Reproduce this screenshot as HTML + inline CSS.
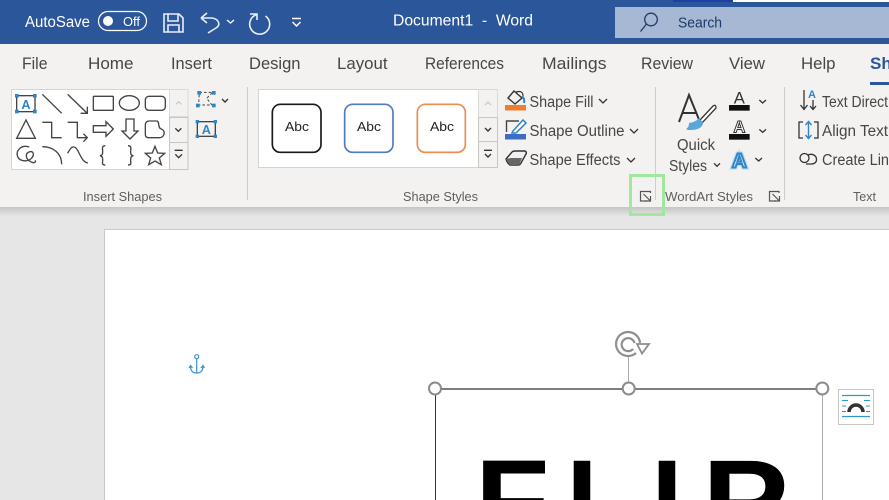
<!DOCTYPE html>
<html><head><meta charset="utf-8"><title>Word</title>
<style>
html,body{margin:0;padding:0;width:889px;height:500px;overflow:hidden;background:#e6e6e6}
svg{display:block;position:absolute;left:0;top:0}
text{font-family:"Liberation Sans",sans-serif}
#big{position:absolute;left:0;top:440px;width:889px;height:60px;overflow:hidden}
#big span{position:absolute;top:4px;height:56px;overflow:hidden;font:bold 115px/115px "Liberation Sans",sans-serif;color:#000;transform-origin:0 0}
</style></head><body>
<svg width="889" height="500" viewBox="0 0 889 500" xmlns="http://www.w3.org/2000/svg">
<defs><linearGradient id="sh" x1="0" y1="0" x2="0" y2="1"><stop offset="0" stop-color="#c4c4c4"/><stop offset="1" stop-color="#e6e6e6"/></linearGradient></defs>
<rect width="889" height="500" fill="#e6e6e6"/>
<rect y="207" width="889" height="9" fill="url(#sh)"/>
<!-- page -->
<rect x="105" y="230" width="784" height="270" fill="#fff"/>
<path d="M104.500 500V229.500H889" fill="none" stroke="#c9c9c9"/>
<!-- title bar -->
<rect width="889" height="44" fill="#2b579a"/>
<rect x="673" y="0" width="60" height="2" fill="#1f3fa8"/><rect x="733" y="0" width="156" height="2" fill="#fff"/>
<rect x="615" y="7" width="274" height="31" fill="#a6b8d4"/>
<text x="25" y="27" font-size="15.500" fill="#fff" textLength="65" lengthAdjust="spacingAndGlyphs">AutoSave</text>
<rect x="98.500" y="11.500" width="48" height="19" rx="9.500" fill="none" stroke="#fff" stroke-width="1.200"/>
<circle cx="108" cy="21" r="5" fill="#fff"/>
<text x="123" y="26" font-size="13" fill="#fff" textLength="17" lengthAdjust="spacingAndGlyphs">Off</text>
<g fill="none" stroke="#e9eef6" stroke-width="1.600">
<path d="M164 14H179L183 18V32H164Z"/><path d="M168 14V21H178V14M168 32V25H179V32"/>
<path d="M201 18H212C219 19 221 25 216 28L208 33M201 18L207 13M201 18L207 23"/>
<path d="M257 14.500A10 10 0 1 0 265.500 16M250 14H257V20"/>
</g>
<path d="M227 20L230.500 23L234 20" fill="none" stroke="#fff" stroke-width="1.300"/>
<path d="M292 18.500H301M292.500 22L296.500 26L300.500 22" fill="none" stroke="#fff" stroke-width="1.500"/>
<text x="393" y="25.500" font-size="15.500" fill="#fff" textLength="140" lengthAdjust="spacingAndGlyphs" xml:space="preserve">Document1  -  Word</text>
<g fill="none" stroke="#1d3a68" stroke-width="1.300"><circle cx="651" cy="19.500" r="6.300"/><path d="M646.500 24L640.500 31.500"/></g>
<text x="678" y="27.500" font-size="15" fill="#1d3a68" textLength="44" lengthAdjust="spacingAndGlyphs">Search</text>
<!-- ribbon -->
<rect y="44" width="889" height="163" fill="#f3f2f1"/>
<g font-size="17" fill="#484644">
<text x="22" y="69" textLength="25.500" lengthAdjust="spacingAndGlyphs">File</text>
<text x="88" y="69" textLength="45.500" lengthAdjust="spacingAndGlyphs">Home</text>
<text x="171" y="69" textLength="41" lengthAdjust="spacingAndGlyphs">Insert</text>
<text x="249" y="69" textLength="51.500" lengthAdjust="spacingAndGlyphs">Design</text>
<text x="337" y="69" textLength="50.500" lengthAdjust="spacingAndGlyphs">Layout</text>
<text x="425" y="69" textLength="79" lengthAdjust="spacingAndGlyphs">References</text>
<text x="542" y="69" textLength="64.500" lengthAdjust="spacingAndGlyphs">Mailings</text>
<text x="641" y="69" textLength="52" lengthAdjust="spacingAndGlyphs">Review</text>
<text x="729" y="69" textLength="36" lengthAdjust="spacingAndGlyphs">View</text>
<text x="801" y="69" textLength="34.500" lengthAdjust="spacingAndGlyphs">Help</text>
</g>
<text x="870" y="69" font-size="17" font-weight="bold" fill="#2b579a">Sh</text>
<rect x="870" y="82" width="19" height="3" fill="#2b579a"/>
<!-- separators -->
<g stroke="#cfcdcb"><path d="M247.500 87V200M655.500 87V200M784.500 87V200"/></g>
<!-- insert shapes gallery -->
<rect x="11.500" y="89.500" width="158" height="80" fill="#fff" stroke="#d6d4d2"/>
<g fill="#f3f2f1" stroke="#c8c6c4"><rect x="169.500" y="89.500" width="18.500" height="27" stroke="#dddbd9"/><rect x="169.500" y="117.500" width="18.500" height="25"/><rect x="169.500" y="142.500" width="18.500" height="27"/></g>
<g transform="translate(0 85) scale(.33333)">
<g fill="none" stroke="#444" stroke-width="4">
<rect x="50" y="32" width="55" height="48"/>
<path d="M127 28L185 85M203 28L262 85M262 65V85H242"/>
<rect x="280" y="34" width="60" height="42" rx="2"/>
<ellipse cx="388" cy="54" rx="30" ry="22"/>
<rect x="436" y="34" width="60" height="42" rx="11"/>
<path d="M50 160L78 105L106 160Z"/>
<path d="M127 112H155V158H185"/>
<path d="M203 112H232V158H262M250 146L262 158L250 170"/>
<path d="M280 122H318V110L340 132L318 154V142H280Z"/>
<path d="M378 102H402V138H414L390 162L366 138H378Z"/>
<path d="M436 120Q436 108 448 108H470C480 108 472 130 484 132C497 136 495 158 478 158H446Q436 158 436 148Z"/>
<path d="M88 186C65 178 48 195 52 212C56 228 78 232 92 222C104 212 102 198 90 200C74 204 76 222 92 230C102 236 108 232 106 226"/>
<path d="M127 185C160 185 185 205 185 238"/>
<path d="M203 205C215 180 225 180 235 200C245 220 250 232 264 234"/>
<path d="M316 182C304 182 308 192 308 200C308 208 308 210 300 212C308 214 308 218 308 226C308 234 304 240 316 240"/>
<path d="M384 182C396 182 392 192 392 200C392 208 392 210 400 212C392 214 392 218 392 226C392 234 396 240 384 240"/>
<path d="M465 184L473 204L494 205L478 219L484 239L465 228L446 239L452 219L436 205L457 204Z"/>
</g>
<g fill="#2e86c9"><rect x="45" y="27" width="11" height="11"/><rect x="99" y="27" width="11" height="11"/><rect x="45" y="74" width="11" height="11"/><rect x="99" y="74" width="11" height="11"/></g>
<text x="78" y="72" font-size="38" font-weight="bold" fill="#2e86c9" text-anchor="middle">A</text>
<path d="M528 58L536 50L544 58" fill="none" stroke="#c8c6c4" stroke-width="3.500"/>
<path d="M526 130L535 139L544 130" fill="none" stroke="#333" stroke-width="4"/>
<path d="M524 196H548M526 208L536 218L546 208" fill="none" stroke="#333" stroke-width="4"/>
<!-- edit shape -->
<path d="M598 22H638L620 40L636 60H596Z" fill="none" stroke="#444" stroke-width="3" stroke-dasharray="8 6"/>
<g fill="#2e86c9"><rect x="592" y="18" width="11" height="11"/><rect x="636" y="18" width="11" height="11"/><rect x="588" y="56" width="11" height="11"/><rect x="636" y="56" width="11" height="11"/></g>
<path d="M666 42L675 51L684 42" fill="none" stroke="#333" stroke-width="4"/>
<rect x="592" y="110" width="54" height="44" fill="none" stroke="#444" stroke-width="4"/>
<g fill="#2e86c9"><rect x="587" y="105" width="10" height="10"/><rect x="641" y="105" width="10" height="10"/><rect x="587" y="149" width="10" height="10"/><rect x="641" y="149" width="10" height="10"/></g>
<text x="619" y="147" font-size="38" font-weight="bold" fill="#2e86c9" text-anchor="middle">A</text>
</g>
<text x="83" y="201" font-size="13" fill="#605e5c" textLength="79" lengthAdjust="spacingAndGlyphs">Insert Shapes</text>
<!-- shape styles -->
<rect x="258.500" y="89.500" width="220" height="78" fill="#fff" stroke="#d6d4d2"/>
<g fill="#f3f2f1" stroke="#c8c6c4"><rect x="478.500" y="89.500" width="19" height="28" stroke="#dddbd9"/><rect x="478.500" y="117.500" width="19" height="24"/><rect x="478.500" y="141.500" width="19" height="26"/></g>
<g transform="translate(250 85) scale(.33333)">
<path d="M705 60L714 51L723 60" fill="none" stroke="#c8c6c4" stroke-width="3.500"/>
<path d="M705 129L714 138L723 129" fill="none" stroke="#333" stroke-width="4"/>
<path d="M702 196H726M705 207L714 216L723 207" fill="none" stroke="#333" stroke-width="4"/>
<rect x="67" y="58" width="146" height="144" rx="24" fill="#fff" stroke="#1a1a1a" stroke-width="5"/>
<rect x="284" y="58" width="145" height="144" rx="24" fill="#fff" stroke="#4f79c4" stroke-width="5"/>
<rect x="502" y="58" width="144" height="144" rx="24" fill="#fff" stroke="#ee8b4e" stroke-width="5"/>
</g>
<g font-size="13" fill="#222"><text x="285" y="131" textLength="24" lengthAdjust="spacingAndGlyphs">Abc</text><text x="357" y="131" textLength="24" lengthAdjust="spacingAndGlyphs">Abc</text><text x="430" y="131" textLength="24" lengthAdjust="spacingAndGlyphs">Abc</text></g>
<!-- shape commands -->
<g font-size="15.500" fill="#484644">
<text x="529.500" y="107" textLength="64" lengthAdjust="spacingAndGlyphs">Shape Fill</text>
<text x="529.500" y="136" textLength="95" lengthAdjust="spacingAndGlyphs">Shape Outline</text>
<text x="529.500" y="165" textLength="91" lengthAdjust="spacingAndGlyphs">Shape Effects</text>
</g>
<g fill="none" stroke="#333" stroke-width="1.300"><path d="M599 99L603 103L607 99M630 129L634 133L638 129M627 158L631 162L635 158"/></g>
<rect x="505" y="105" width="21" height="5.500" fill="#ed7d31"/>
<path d="M514 91L522 98L515 104L508 98Z" fill="none" stroke="#333" stroke-width="1.400"/>
<path d="M516 92Q523 90 523 96" fill="none" stroke="#333" stroke-width="1.200"/>
<path d="M522 96Q525 99 524 103" fill="none" stroke="#2e86c9" stroke-width="2"/>
<rect x="505" y="134" width="21" height="5.500" fill="#3d6cc4"/>
<path d="M506.500 132V121H519" fill="none" stroke="#444" stroke-width="1.400"/>
<path d="M513 131L523 120L526 123L516 133L512 133Z" fill="#fff" stroke="#2e86c9" stroke-width="1.500"/>
<path d="M506 159L512 152Q513 151 515 151H525Q527 152 526 154L521 163Q520 165 518 165H510Q507 163 506 159Z" fill="#f0f0f0" stroke="#333" stroke-width="1.400"/>
<path d="M506 159L510 165H519L522 158H511Z" fill="#666"/>
<text x="403" y="201" font-size="13" fill="#605e5c" textLength="75" lengthAdjust="spacingAndGlyphs">Shape Styles</text>
<!-- launcher + highlight -->
<g fill="none" stroke="#555" stroke-width="1.200"><path d="M650.500 193V191.500H640.500V201H647"/><path d="M643.500 194L650 200.500M650.500 196V201H645.500"/></g>
<rect x="630.500" y="175.500" width="33" height="39" fill="none" stroke="#a0e8a0" stroke-width="3"/>
<!-- wordart -->
<path d="M679 122L689 95L700 122M682.500 113H696" fill="none" stroke="#333" stroke-width="2"/>
<path d="M700 120L713 106Q716 104 716 108L702 123Z" fill="#fff" stroke="#333" stroke-width="1.300"/>
<path d="M689 123Q696 122 699 118L703 123Q702 130 690 130Q685 130 687 128Q689 127 689 123Z" fill="#5aa6dc"/>
<g transform="translate(650 80) scale(.33333)">
<text x="268" y="70" font-size="50" fill="#333" text-anchor="middle">A</text>
<rect x="237" y="75" width="62" height="17" fill="#111"/>
<text x="268" y="158" font-size="50" font-weight="bold" fill="#fff" stroke="#333" stroke-width="3" text-anchor="middle">A</text>
<rect x="237" y="162" width="62" height="17" fill="#111"/>
<text x="268" y="262" font-size="62" font-weight="bold" fill="#fff" stroke="#bcdcf3" stroke-width="13" text-anchor="middle">A</text>
<text x="268" y="262" font-size="62" font-weight="bold" fill="#fff" stroke="#2e86c9" stroke-width="6" text-anchor="middle">A</text>
<path d="M328 60L338 69L348 60M328 148L338 157L348 148M316 234L326 243L336 234M192 250L201 259L210 250" fill="none" stroke="#333" stroke-width="4"/>
</g>
<g font-size="15.500" fill="#484644"><text x="677" y="150" textLength="38" lengthAdjust="spacingAndGlyphs">Quick</text><text x="669" y="171" textLength="38" lengthAdjust="spacingAndGlyphs">Styles</text></g>
<text x="665" y="201" font-size="13" fill="#605e5c" textLength="88" lengthAdjust="spacingAndGlyphs">WordArt Styles</text>
<g fill="none" stroke="#555" stroke-width="1.200"><path d="M779 193V191.500H769.500V201H776"/><path d="M772.500 194L779 200.500M779.500 196V201H774.500"/></g>
<!-- text group -->
<g font-size="15.500" fill="#484644"><text x="822" y="107" textLength="66" lengthAdjust="spacingAndGlyphs">Text Direct</text><text x="822" y="136" textLength="66" lengthAdjust="spacingAndGlyphs">Align Text</text><text x="822" y="165" textLength="67" lengthAdjust="spacingAndGlyphs">Create Lin</text></g>
<g fill="none" stroke="#333" stroke-width="1.300">
<path d="M804 90V109M800.500 105L804 109.500L807.500 105M813 100V109M810 106L813 109.500L816 106"/>
<path d="M803 122H799V138H803M814 122H818V138H814"/>
<circle cx="804.500" cy="158" r="4.500"/><path d="M808 155Q813 153 816 157Q818 163 812 164H806"/>
</g>
<text x="808" y="98" font-size="11" font-weight="bold" fill="#2e86c9">A</text>
<path d="M808.500 122V138M805.500 125L808.500 121.500L811.500 125M805.500 135L808.500 138.500L811.500 135" fill="none" stroke="#2e86c9" stroke-width="1.400"/>
<text x="853" y="201" font-size="13" fill="#605e5c" textLength="23" lengthAdjust="spacingAndGlyphs">Text</text>
<!-- anchor -->
<g fill="none" stroke="#3a93cf" stroke-width="1.200"><circle cx="196.700" cy="356.700" r="2"/><path d="M196.700 358.700V373M190.500 366Q190.500 373 196.700 373Q203 373 203 366M189 368L190.500 365.500L192.500 368M200.800 368L203 365.500L204.500 368"/></g>
<!-- selection box -->
<path d="M435 389H822" stroke="#555" stroke-width="1.500"/>
<path d="M435.500 389V500" stroke="#333" stroke-width="1"/>
<path d="M822.500 389V500M628.500 356V384" stroke="#aaa" stroke-width="1"/>
<g fill="#fff" stroke="#8c8c8c" stroke-width="2"><circle cx="435" cy="388.500" r="6"/><circle cx="628.700" cy="388.500" r="6"/><circle cx="822.300" cy="388.500" r="6"/></g>
<!-- rotate handle -->
<g fill="none" stroke="#8e8e8e" stroke-width="2.200"><path d="M640 343A12 12 0 1 0 636 353"/><path d="M634.500 343A6.500 6.500 0 1 0 633 349"/></g>
<path d="M637 344H649L642 353.500Z" fill="#fff" stroke="#8e8e8e" stroke-width="1.800"/>
<!-- layout options -->
<rect x="838.500" y="389.500" width="35" height="35" fill="#fff" stroke="#c8c6c4"/>
<path d="M842 395.500H870M842 416.500H870" stroke="#2e95d3" stroke-width="1.200"/>
<path d="M842 400.500H848M864 400.500H870M842 406H846M866 406H870M842 411.500H846M866 411.500H870" stroke="#2e95d3" stroke-width="1"/>
<path d="M849 412A7 7 0 0 1 863 412" fill="none" stroke="#333" stroke-width="3.500"/>
</svg>
<!-- big text -->
<div id="big"><span style="left:475px;transform:scaleX(1.06)">F</span><span style="left:566px">L</span><span style="left:651px">I</span><span style="left:702px;transform:scaleX(1.13)">P</span></div>
</body></html>
